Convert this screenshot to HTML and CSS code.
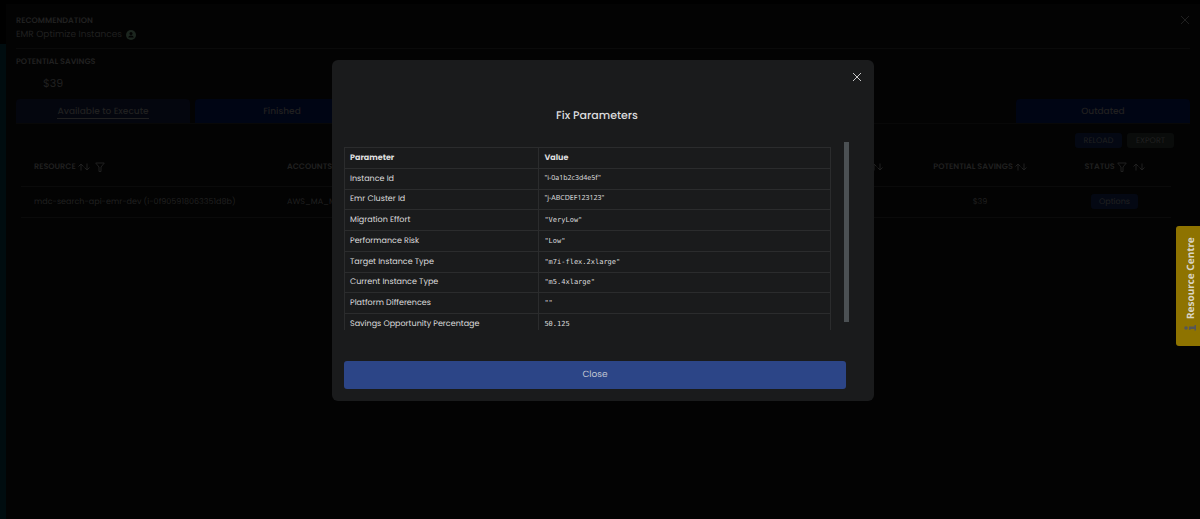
FILE: index.html
```html
<!DOCTYPE html>
<html lang="en">
<head>
    <meta charset="UTF-8">
    <meta name="viewport" content="width=device-width, initial-scale=1.0">
    <title>EMR Optimize Instances</title>
    <link rel="stylesheet" href="styles.css">
</head>
<body>
    <svg class="sprite" aria-hidden="true">
        <symbol id="cross" viewBox="0 0 10 10"><path d="M1 1l8 8M9 1l-8 8"/></symbol>
        <symbol id="sort" viewBox="0 0 12 8"><path d="M3 7.500V1M.500 3.500L3 1l2.500 2.500M9 .500V7M6.500 4.500L9 7l2.500-2.500"/></symbol>
        <symbol id="filter" viewBox="0 0 10 10"><path d="M.700 1h8.600L6 5v4.500H4V5z"/></symbol>
    </svg>

    <div class="page">
        <div class="sidebar"></div>
        <main class="panel">
            <header class="panel-header">
                <div>
                    <h1 class="caption">RECOMMENDATION</h1>
                    <p class="name">EMR Optimize Instances
                        <svg class="user" viewBox="0 0 10 10"><circle class="disc" cx="5" cy="5" r="5"/><circle cx="5" cy="3.500" r="1.500"/><path d="M2.300 7.500C2.300 4.700 7.700 4.700 7.700 7.500z"/></svg>
                    </p>
                </div>
                <button class="icon-button" aria-label="Close panel"><svg class="icon cross"><use href="#cross"/></svg></button>
            </header>

            <h2 class="caption savings-title">POTENTIAL SAVINGS</h2>
            <p class="savings">$39</p>

            <nav class="tabs">
                <button class="tab active"><span>Available to Execute</span></button>
                <button class="tab">Finished</button>
                <button class="tab last">Outdated</button>
            </nav>

            <div class="actions">
                <button class="small-button">RELOAD</button>
                <button class="small-button grey">EXPORT</button>
            </div>

            <table class="resources">
                <thead>
                    <tr>
                        <th class="col-resource">RESOURCE <svg class="icon sort"><use href="#sort"/></svg> <svg class="icon filter spaced"><use href="#filter"/></svg></th>
                        <th>ACCOUNTS</th>
                        <th class="col-sort"><svg class="icon sort"><use href="#sort"/></svg></th>
                        <th class="col-savings">POTENTIAL SAVINGS <svg class="icon sort"><use href="#sort"/></svg></th>
                        <th class="col-status">STATUS <svg class="icon filter"><use href="#filter"/></svg> <svg class="icon sort spaced"><use href="#sort"/></svg></th>
                    </tr>
                </thead>
                <tbody>
                    <tr>
                        <td>mdc-search-api-emr-dev (i-0f905918063351d8b)</td>
                        <td>AWS_MA_M</td>
                        <td></td>
                        <td class="center">$39</td>
                        <td class="center"><button class="small-button">Options</button></td>
                    </tr>
                </tbody>
            </table>
        </main>
    </div>

    <div class="overlay">
        <div class="modal" role="dialog" aria-labelledby="modal-title">
            <div class="modal-top">
                <button class="icon-button" aria-label="Close dialog"><svg class="icon cross"><use href="#cross"/></svg></button>
            </div>
            <h2 id="modal-title">Fix Parameters</h2>
            <div class="scroll-area">
                <div class="scroll">
                    <table class="params">
                        <tr><th>Parameter</th><th>Value</th></tr>
                        <tr><td>Instance Id</td><td class="id">"i-0a1b2c3d4e5f"</td></tr>
                        <tr><td>Emr Cluster Id</td><td class="id">"j-ABCDEF123123"</td></tr>
                        <tr><td>Migration Effort</td><td class="code">"VeryLow"</td></tr>
                        <tr><td>Performance Risk</td><td class="code">"Low"</td></tr>
                        <tr><td>Target Instance Type</td><td class="code">"m7i-flex.2xlarge"</td></tr>
                        <tr><td>Current Instance Type</td><td class="code">"m5.4xlarge"</td></tr>
                        <tr><td>Platform Differences</td><td class="code">""</td></tr>
                        <tr><td>Savings Opportunity Percentage</td><td class="code">50.125</td></tr>
                    </table>
                </div>
                <div class="thumb"></div>
            </div>
            <button class="close-button">Close</button>
        </div>
    </div>

    <button class="resource-centre">
        <svg viewBox="0 0 12 8"><circle cx="2" cy="4" r="1.800"/><path d="M5 2.500V6h1.500V5H10.500V6.500H12V1H10.500V2.500z"/></svg>
        Resource Centre
    </button>
</body>
</html>
```
FILE: styles.css
```css
* {
    box-sizing: border-box;
}

body {
    margin: 0;
    background-color: #000;
    color: #202020;
    font-family: Poppins, Inter, sans-serif;
    font-size: 8px;
    line-height: 12px;
    text-rendering: geometricPrecision;
}

h1, h2, p {
    margin: 0;
}

button {
    border: none;
    padding: 0;
    font-family: inherit;
    color: inherit;
    text-rendering: inherit;
    cursor: pointer;
}

.sprite {
    display: none;
}

.icon {
    fill: none;
    stroke: currentColor;
    vertical-align: middle;
}

.cross {
    display: block;
    width: 10px;
    height: 10px;
}

.sort {
    width: 12px;
    height: 8px;
}

.filter {
    width: 10px;
    height: 10px;
}

.spaced {
    margin-left: 4px;
}

.icon-button {
    background: none;
}

/* recommendation panel */
.page {
    display: flex;
    min-height: 100vh;
    padding-top: 4px;
}

.sidebar {
    width: 6px;
    margin-top: 40px;
    background-color: #000c0f;
}

.panel {
    flex: 1;
    padding: 11px 10px 0;
    background-color: #030303;
}

.panel-header {
    display: flex;
    justify-content: space-between;
    align-items: flex-start;
    height: 34px;
    border-bottom: 1px solid #0a0a0a;
}

.caption {
    font-size: 8px;
    font-weight: 600;
}

.name {
    display: flex;
    align-items: center;
    gap: 4px;
    font-size: 9px;
    line-height: 16px;
}

.user {
    width: 10px;
    height: 10px;
    fill: #030303;
}

.user .disc {
    fill: #1c261f;
}

.savings-title {
    margin-top: 7px;
}

.savings {
    padding: 7px 27px 8px;
    font-size: 11px;
    line-height: 16px;
}

.tabs {
    display: flex;
    gap: 5px;
    border-bottom: 1px solid #080808;
}

.tab {
    width: 174px;
    height: 24px;
    padding-top: 2px;
    border-radius: 4px 4px 0 0;
    background-color: #000514;
    font-size: 9px;
    font-weight: 500;
}

.tab.active {
    background-color: #04060e;
}

.tab.active span {
    border-bottom: 1px solid #202020;
}

.tab.last {
    margin-left: auto;
}

.actions {
    display: flex;
    justify-content: flex-end;
    gap: 5px;
    padding: 9px 16px 0;
}

.small-button {
    width: 47px;
    height: 15px;
    border-radius: 3px;
    background-color: #040813;
    font-size: 8px;
}

.small-button.grey {
    background-color: #0a0c0b;
}

.resources {
    width: calc(100% - 24px);
    margin-left: 5px;
    border-collapse: collapse;
    table-layout: fixed;
}

.resources th,
.resources td {
    padding: 0 0 0 13px;
    border-bottom: 1px solid #0a0a0a;
    text-align: left;
    white-space: nowrap;
}

.resources th {
    height: 38px;
    font-weight: 600;
}

.resources td {
    height: 31px;
}

.resources .col-resource {
    width: 22%;
}

.resources .col-sort {
    width: 50px;
    padding-left: 0;
    text-align: center;
}

.resources .col-savings {
    width: 156px;
    padding-left: 0;
    text-align: center;
}

.resources .col-status {
    width: 113px;
    padding-left: 0;
    text-align: center;
}

.resources .center {
    padding: 0;
    text-align: center;
}

/* parameters dialog */
.overlay {
    position: fixed;
    inset: 0 0 0 6px;
    display: flex;
    justify-content: center;
    align-items: flex-start;
    padding-top: 60px;
}

.modal {
    width: 542px;
    max-width: 90%;
    padding: 12px;
    border-radius: 6px;
    background-color: #1a1b1c;
    color: #dcdcdc;
}

.modal-top {
    display: flex;
    justify-content: flex-end;
}

.modal-top .icon-button {
    color: #c8c8c8;
}

.modal h2 {
    margin: 24px 0 18px;
    padding-right: 12px;
    font-size: 11px;
    font-weight: 500;
    line-height: 18px;
    text-align: center;
}

.scroll-area {
    display: flex;
    gap: 13px;
    height: 188px;
    margin-right: 13px;
}

.scroll {
    flex: 1;
    padding: 5px 0 4px;
    overflow-y: auto;
    scrollbar-width: none;
}

.thumb {
    width: 5px;
    height: 96%;
    background-color: #4b5053;
}

.params {
    width: 100%;
    height: 188px;
    border-collapse: collapse;
    table-layout: fixed;
}

.params th,
.params td {
    padding: 0 5px;
    border: 1px solid #2b2c2d;
    text-align: left;
}

.params th:first-child {
    width: 40%;
}

.params .id {
    font-family: "Noto Sans", sans-serif;
    font-size: 7px;
}

.params .code {
    font-family: "DejaVu Sans Mono", monospace;
    font-size: 7px;
}

.close-button {
    display: block;
    width: calc(100% - 16px);
    height: 28px;
    margin-top: 31px;
    border-radius: 3px;
    background-color: #2c4587;
    color: #c3c8d4;
    font-size: 9px;
}

.resource-centre {
    position: fixed;
    top: 226px;
    right: 0;
    display: flex;
    align-items: center;
    justify-content: center;
    gap: 5px;
    width: 24px;
    height: 120px;
    padding: 2px 4px 0 0;
    border-radius: 0 3px 3px 0;
    background-color: #8e7300;
    color: #d9d5c5;
    font-family: "Noto Sans", sans-serif;
    font-size: 10px;
    font-weight: 700;
    writing-mode: vertical-rl;
    transform: rotate(180deg);
}

.resource-centre svg {
    width: 12px;
    height: 8px;
    fill: #55565a;
    transform: rotate(180deg);
}
```
